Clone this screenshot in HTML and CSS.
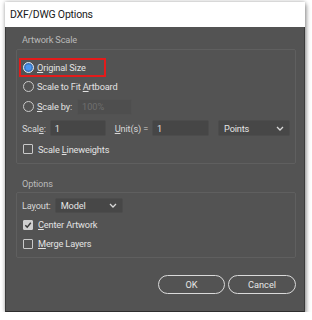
FILE: index.html
```html
<!DOCTYPE html>
<html>
<head>
    <link rel="stylesheet" href="styles.css">
</head>
<body>
    <div class="window">
        <div class="titlebar">DXF/DWG Options</div>
        <div class="panel">
            <div class="legend">Artwork Scale</div>
            <div class="group group-scale">
                <div class="row row-original">
                    <span class="highlight">
                        <span class="radio checked"></span>
                        <span><u>O</u>riginal Size</span>
                    </span>
                </div>
                <div class="row row-fit">
                    <span class="radio"></span>
                    <span>Scale to Fit <u>A</u>rtboard</span>
                </div>
                <div class="row row-by">
                    <span class="radio"></span>
                    <span class="by-label"><u>S</u>cale by:</span>
                    <input class="field field-by" type="text" value="100%" disabled>
                </div>
                <div class="row row-units">
                    <span class="field-label">Scal<u>e</u>:</span>
                    <input class="field field-scale" type="text" value="1">
                    <span class="field-label units-label"><u>U</u>nit(s) =</span>
                    <input class="field field-units" type="text" value="1">
                    <div class="dropdown dropdown-points">
                        <span>Points</span>
                        <svg width="8" height="5" viewBox="0 0 8 5"><path d="M1 1l3 3 3-3" fill="none" stroke="#d8d8d8" stroke-width="1.3"/></svg>
                    </div>
                </div>
                <div class="row row-lineweights">
                    <span class="checkbox"></span>
                    <span>Scale <u>L</u>ineweights</span>
                </div>
            </div>

            <div class="legend legend-options">Options</div>
            <div class="group group-options">
                <div class="row row-layout">
                    <span class="field-label">La<u>y</u>out:</span>
                    <div class="dropdown dropdown-layout">
                        <span>Model</span>
                        <svg width="8" height="5" viewBox="0 0 8 5"><path d="M1 1l3 3 3-3" fill="none" stroke="#d8d8d8" stroke-width="1.3"/></svg>
                    </div>
                </div>
                <div class="row row-center">
                    <span class="checkbox checked">
                        <svg width="8" height="8" viewBox="0 0 8 8"><path d="M1.3 4.2l1.9 1.9 3.6-4.4" fill="none" stroke="#3a3a3a" stroke-width="1.4"/></svg>
                    </span>
                    <span><u>C</u>enter Artwork</span>
                </div>
                <div class="row row-merge">
                    <span class="checkbox"></span>
                    <span><u>M</u>erge Layers</span>
                </div>
            </div>

            <div class="buttons">
                <button class="btn btn-ok">OK</button>
                <button class="btn btn-cancel">Cancel</button>
            </div>
        </div>
    </div>
</body>
</html>
```

FILE: styles.css
```css
body {
    margin: 0;
    background: #ffffff;
    font-family: Roboto, "Noto Sans", sans-serif;
    font-size: 9.2px;
    letter-spacing: -0.15px;
}
.window {
    margin: 2px 0 0 5px;
    width: 300px;
    height: 310px;
    box-shadow: 0 0 4px rgba(0, 0, 0, 0.35), 2px 3px 4px rgba(0, 0, 0, 0.25);
    display: flex;
    flex-direction: column;
}
.titlebar {
    height: 25px;
    line-height: 25px;
    padding-left: 5px;
    background: #ffffff;
    color: #1a1a1a;
    font-size: 10.5px;
    letter-spacing: -0.2px;
}
.panel {
    flex: 1;
    background: #535353;
    border-left: 1px solid #3a3a3a;
    border-bottom: 1px solid #2e2e2e;
    border-right: 1px solid #3a3a3a;
    padding: 0 8px 0 10px;
    color: #e2e2e2;
}
.legend {
    margin-top: 5px;
    height: 16px;
    line-height: 16px;
    margin-bottom: 1px;
    padding-left: 6px;
    color: #b9b9b9;
}
.legend-options {
    margin-top: 12px;
    margin-bottom: 0;
}
.group {
    border: 1px solid #5f5f5f;
    border-radius: 2px;
    padding-left: 6px;
}
.group-scale {
    box-sizing: border-box;
    height: 115px;
    padding-top: 8px;
}
.group-options {
    box-sizing: border-box;
    height: 66px;
    padding-top: 2px;
}
.row {
    display: flex;
    align-items: center;
    white-space: nowrap;
}
u {
    text-decoration-thickness: 1px;
    text-underline-offset: 1px;
}
.row-original, .row-fit {
    height: 19px;
}
.row-by {
    height: 21px;
}
.row-units {
    height: 22px;
}
.row-lineweights {
    height: 20px;
}
.row-layout {
    height: 20px;
}
.row-center, .row-merge {
    height: 19px;
}
.highlight {
    box-sizing: border-box;
    display: flex;
    align-items: center;
    width: 87px;
    height: 19px;
    margin-left: -4px;
    padding-left: 2px;
    border: 2px solid #e31b1b;
}
.radio {
    width: 9px;
    height: 9px;
    border-radius: 50%;
    border: 1px solid #c9c9c9;
    margin-right: 3px;
    flex-shrink: 0;
}
.radio.checked {
    border-color: #e8e8e8;
    background: #4a95ef;
    box-shadow: inset 0 0 0 1.5px #3b73b8;
}
.checkbox {
    width: 8px;
    height: 8px;
    border: 1px solid #c9c9c9;
    border-radius: 1px;
    margin-right: 5px;
    display: flex;
    align-items: center;
    justify-content: center;
}
.checkbox.checked {
    background: #d0d0d0;
    border-color: #d0d0d0;
}
.field {
    box-sizing: border-box;
    height: 16px;
    padding: 0 4px;
    border: 1px solid #4c4c4c;
    border-radius: 2px;
    background: #464646;
    color: #e0e0e0;
    font-family: inherit;
    font-size: 9.2px;
    outline: none;
}
.field-by {
    width: 55px;
    margin-left: 5px;
    background: #4e4e4e;
    border-color: #525252;
    color: #6f6f6f;
}
.field-label {
    margin-left: -1px;
    color: #d6d6d6;
}
.field-scale {
    width: 56px;
    margin-left: 4px;
}
.units-label {
    margin-left: 9px;
}
.field-units {
    width: 57px;
    margin-left: 4px;
}
.dropdown {
    box-sizing: border-box;
    height: 16px;
    display: flex;
    align-items: center;
    justify-content: space-between;
    padding: 0 5px 0 5px;
    background: #474747;
    border: 1px solid #4c4c4c;
    border-radius: 2px;
    color: #e4e4e4;
}
.dropdown-points {
    width: 72px;
    margin-left: 9px;
}
.dropdown-layout {
    width: 68px;
    margin-left: 4px;
    height: 15px;
}
.buttons {
    margin-top: 17px;
    display: flex;
    justify-content: flex-end;
    gap: 3px;
}
.btn {
    box-sizing: border-box;
    height: 19px;
    border: 1.5px solid #dadada;
    border-radius: 10px;
    background: transparent;
    color: #e6e6e6;
    font-family: inherit;
    font-size: 9.2px;
    padding: 0;
}
.btn-ok {
    width: 67px;
}
.btn-cancel {
    width: 68px;
}
```
